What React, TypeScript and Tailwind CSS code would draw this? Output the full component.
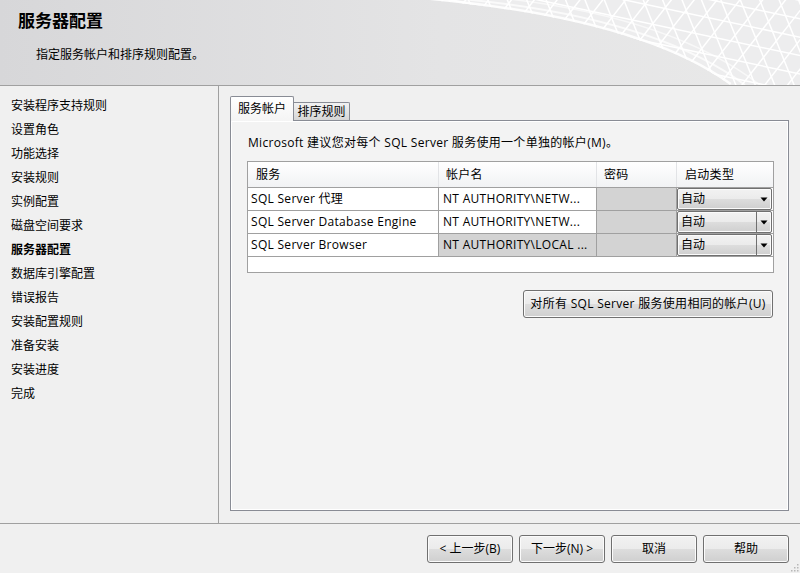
import React from "react"

const steps = [
  "安装程序支持规则",
  "设置角色",
  "功能选择",
  "安装规则",
  "实例配置",
  "磁盘空间要求",
  "服务器配置",
  "数据库引擎配置",
  "错误报告",
  "安装配置规则",
  "准备安装",
  "安装进度",
  "完成",
]

const services = [
  { name: "SQL Server 代理", account: "NT AUTHORITY\\NETW...", locked: false, split: false },
  { name: "SQL Server Database Engine", account: "NT AUTHORITY\\NETW...", locked: false, split: true },
  { name: "SQL Server Browser", account: "NT AUTHORITY\\LOCAL ...", locked: true, split: true },
]

const winButton =
  "border border-[#707070] rounded-[3px] bg-[linear-gradient(to_bottom,#f2f2f2_0%,#ebebeb_50%,#dddddd_51%,#cfcfcf_100%)] shadow-[inset_0_0_0_1px_#fbfbfb] text-[12px] text-black flex items-center justify-center"

// white lattice in the top-right corner of the banner
function HeaderArt() {
  const region = "M430,0 Q640,20 730,85 L800,85 L800,0 Z"
  const lines: string[] = []
  const angles = [12, 68, 128]
  angles.forEach((deg) => {
    const t = (deg * Math.PI) / 180
    const dx = Math.cos(t)
    const dy = Math.sin(t)
    for (let k = -30; k <= 30; k++) {
      const cx = 640 - dy * k * 18
      const cy = 40 + dx * k * 18
      lines.push(`M${cx - dx * 500},${cy - dy * 500} L${cx + dx * 500},${cy + dy * 500}`)
    }
  })
  return (
    <svg className="absolute left-0 top-0" width="800" height="85" viewBox="0 0 800 85">
      <defs>
        <clipPath id="mesh">
          <path d={region} />
        </clipPath>
      </defs>
      <path d={region} fill="#ededee" />
      <g clipPath="url(#mesh)" stroke="#ffffff" strokeWidth="1.5" fill="none">
        {lines.map((d, i) => (
          <path key={i} d={d} />
        ))}
        <path d="M430,0 Q640,20 730,85" strokeWidth="5" opacity="0.85" />
        <path d="M440,-3 Q650,14 745,85" strokeWidth="2" opacity="0.7" />
        <path d="M455,-6 Q660,8 760,85" strokeWidth="1.5" opacity="0.6" />
      </g>
    </svg>
  )
}

function Arrow() {
  return (
    <svg width="8" height="5" viewBox="0 0 8 5">
      <path d="M0.5,0.5 L7.5,0.5 L4,4.5 Z" fill="#000" />
    </svg>
  )
}

function Combo({ split }: { split: boolean }) {
  return (
    <div className="w-[95px] h-[22px] border border-[#707070] rounded-[2px] bg-[linear-gradient(to_bottom,#f2f2f2_0%,#ebebeb_50%,#dddddd_51%,#cfcfcf_100%)] shadow-[inset_0_0_0_1px_#fbfbfb] flex items-center">
      <span className="flex-1 pl-[3px] text-[12px] leading-none">自动</span>
      <span
        className={`w-[15px] h-full flex items-center justify-center ${split ? "border-l border-[#707070]" : ""}`}
      >
        <Arrow />
      </span>
    </div>
  )
}

export default function App() {
  return (
    <div className="w-[800px] h-[573px] bg-[#f0f0f0] flex flex-col overflow-hidden text-black font-['Open_Sans','Noto_Sans_CJK_SC',sans-serif]">
      {/* banner */}
      <header className="relative h-[86px] shrink-0 border-b border-[#a0a0a0] bg-[linear-gradient(to_right,#d7d7d9,#e4e4e5_55%,#e9e9e9)]">
        <HeaderArt />
        <div className="relative pl-[18px] pt-[9px]">
          <h1 className="text-[17px] font-bold leading-[24px]">服务器配置</h1>
          <p className="pl-[18px] mt-[14px] text-[12px] leading-[16px]">指定服务帐户和排序规则配置。</p>
        </div>
      </header>

      <div className="flex flex-1 min-h-0">
        {/* steps */}
        <nav className="w-[219px] shrink-0 border-r border-[#a0a0a0] pt-[8px] pl-[11px]">
          {steps.map((s) => (
            <div
              key={s}
              className={`h-[24px] leading-[24px] text-[12px] ${s === "服务器配置" ? "font-bold" : ""}`}
            >
              {s}
            </div>
          ))}
        </nav>

        {/* tab control */}
        <main className="flex-1 flex flex-col pt-[10px] px-[11px] pb-[12px]">
          <div className="flex items-end h-[24px]">
            <div className="relative z-10 -mb-px h-[25px] w-[64px] border border-b-0 border-[#898c95] rounded-t-[2px] bg-[linear-gradient(to_bottom,#ffffff,#f4f4f4)] flex items-center justify-center text-[12px]">
              服务帐户
            </div>
            <div className="h-[18px] w-[56px] border border-l-0 border-b-0 border-[#898c95] rounded-tr-[2px] bg-[linear-gradient(to_bottom,#f2f2f2,#d6d6d6)] flex items-center justify-center text-[12px]">
              排序规则
            </div>
          </div>

          <section className="flex-1 border border-[#898c95] bg-[#f3f3f3] shadow-[inset_0_0_0_1px_#ffffff] pl-[16px] pt-[14px] tracking-[0.3px]">
            <p className="pl-[1px] text-[12px] leading-[16px]">
              Microsoft 建议您对每个 SQL Server 服务使用一个单独的帐户(M)。
            </p>

            {/* service grid */}
            <div className="mt-[10px] w-[527px] h-[112px] border border-[#a0a0a0] bg-white text-[12px]">
              <div className="flex h-[26px] border-b border-[#a0a0a0] bg-[linear-gradient(to_bottom,#ffffff,#f1f2f4)]">
                <div className="w-[191px] border-r border-[#e2e3e6] pl-[8px] flex items-center">服务</div>
                <div className="w-[158px] border-r border-[#e2e3e6] pl-[7px] flex items-center">帐户名</div>
                <div className="w-[80px] border-r border-[#e2e3e6] pl-[7px] flex items-center">密码</div>
                <div className="flex-1 pl-[8px] flex items-center">启动类型</div>
              </div>
              {services.map((r) => (
                <div key={r.name} className="flex h-[23px] border-b border-[#a0a0a0]">
                  <div className="w-[191px] border-r border-[#a0a0a0] pl-[3px] flex items-center whitespace-nowrap">
                    {r.name}
                  </div>
                  <div
                    className={`w-[158px] border-r border-[#a0a0a0] pl-[4px] flex items-center whitespace-nowrap overflow-hidden ${r.locked ? "bg-[#d3d3d3]" : ""}`}
                  >
                    {r.account}
                  </div>
                  <div className="w-[80px] border-r border-[#a0a0a0] bg-[#d3d3d3]" />
                  <div className="flex-1 flex items-center tracking-normal">
                    <Combo split={r.split} />
                  </div>
                </div>
              ))}
            </div>

            <div className="w-[527px] flex justify-end mt-[17px]">
              <button className={`${winButton} w-[250px] h-[28px] mr-[1px] tracking-[0.3px]`}>
                对所有 SQL Server 服务使用相同的帐户(U)
              </button>
            </div>
          </section>
        </main>
      </div>

      {/* wizard buttons */}
      <footer className="relative h-[50px] shrink-0 border-t border-[#a0a0a0] flex justify-end items-start gap-[6px] pt-[11px] pr-[11px]">
        <button className={`${winButton} w-[86px] h-[28px]`}>&lt; 上一步(B)</button>
        <button className={`${winButton} w-[86px] h-[28px]`}>下一步(N) &gt;</button>
        <button className={`${winButton} w-[86px] h-[28px]`}>取消</button>
        <button className={`${winButton} w-[86px] h-[28px]`}>帮助</button>
        <svg className="absolute right-[1px] bottom-[1px]" width="10" height="10" viewBox="0 0 10 10">
          {[
            [8, 2],
            [8, 5],
            [5, 5],
            [8, 8],
            [5, 8],
            [2, 8],
          ].map(([x, y], i) => (
            <rect key={i} x={x} y={y} width="1.5" height="1.5" fill="#b8b8b8" />
          ))}
        </svg>
      </footer>
    </div>
  )
}
